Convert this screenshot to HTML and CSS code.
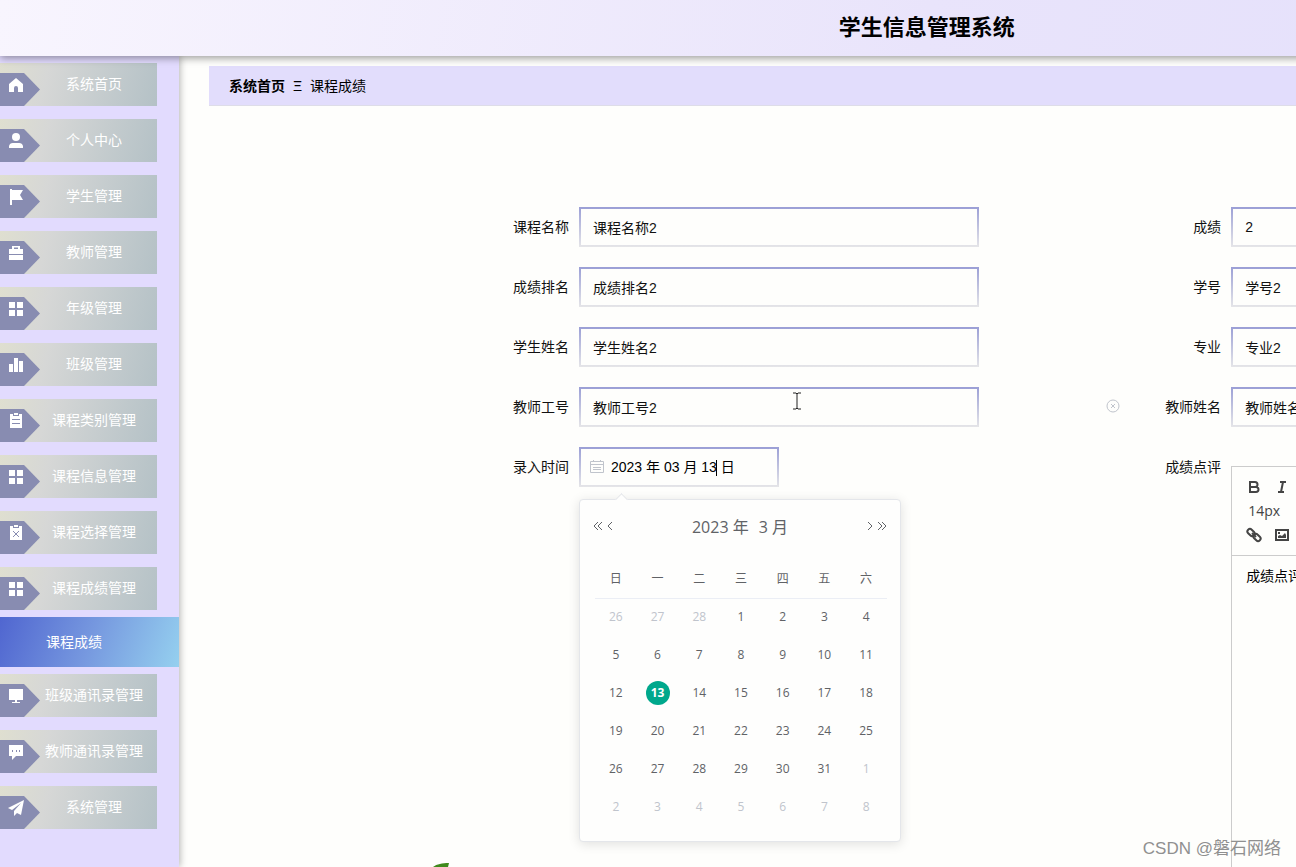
FILE: index.html
```html
<!DOCTYPE html>
<html lang="zh-CN">
<head>
    <meta charset="UTF-8">
    <meta name="viewport" content="width=device-width, initial-scale=1.0">
    <title>学生信息管理系统</title>
    <link rel="stylesheet" href="styles.css">
</head>
<body>

    <header class="header"><h1>学生信息管理系统</h1></header>

    <div class="layout">
        <!-- Side menu -->
        <nav class="sidebar">
            <a class="menu-item" href="#"><i class="arrow"></i><svg class="menu-icon" viewBox="0 0 16 16"><path d="M8 1 1 7v8h5v-4a2 2 0 0 1 4 0v4h5V7z"/></svg><span>系统首页</span></a>
            <a class="menu-item" href="#"><i class="arrow"></i><svg class="menu-icon" viewBox="0 0 16 16"><circle cx="8" cy="4" r="4"/><path d="M1 15v-2a4 4 0 0 1 4-3h6a4 4 0 0 1 4 3v2z"/></svg><span>个人中心</span></a>
            <a class="menu-item" href="#"><i class="arrow"></i><svg class="menu-icon" viewBox="0 0 16 16"><path d="M2 0h2v1h11l-3 5 3 5H4v5H2z"/></svg><span>学生管理</span></a>
            <a class="menu-item" href="#"><i class="arrow"></i><svg class="menu-icon" viewBox="0 0 16 16"><path d="M4 4V1h8v3h3v5H1V4zm2 0h4V2.500H6zM1 10h14v5H1z"/></svg><span>教师管理</span></a>
            <a class="menu-item" href="#"><i class="arrow"></i><svg class="menu-icon" viewBox="0 0 16 16"><path d="M1 1h6v6H1zM9 1h6v6H9zM1 9h6v6H1zM9 9h6v6H9z"/></svg><span>年级管理</span></a>
            <a class="menu-item" href="#"><i class="arrow"></i><svg class="menu-icon" viewBox="0 0 16 16"><path d="M1 7h4v8H1zM6 1h4v14H6zM11 4h4v11h-4z"/></svg><span>班级管理</span></a>
            <a class="menu-item" href="#"><i class="arrow"></i><svg class="menu-icon" viewBox="0 0 16 16"><path fill-rule="evenodd" d="M2 1h3v2h6V1h3v14H2zM4 6v1h8V6zm0 4v1h8v-1zM6 0h4v2H6z"/></svg><span>课程类别管理</span></a>
            <a class="menu-item" href="#"><i class="arrow"></i><svg class="menu-icon" viewBox="0 0 16 16"><path d="M1 1h6v6H1zM9 1h6v6H9zM1 9h6v6H1zM9 9h6v6H9z"/></svg><span>课程信息管理</span></a>
            <a class="menu-item" href="#"><i class="arrow"></i><svg class="menu-icon" viewBox="0 0 16 16"><path d="M2 1h3v2h6V1h3v14H2zM6 0h4v2H6z"/><path class="cut" d="m5 6 6 6M11 6l-6 6"/></svg><span>课程选择管理</span></a>
            <a class="menu-item" href="#"><i class="arrow"></i><svg class="menu-icon" viewBox="0 0 16 16"><path d="M1 1h6v6H1zM9 1h6v6H9zM1 9h6v6H1zM9 9h6v6H9z"/></svg><span>课程成绩管理</span></a>
            <a class="sub-item" href="#">课程成绩</a>
            <a class="menu-item" href="#"><i class="arrow"></i><svg class="menu-icon" viewBox="0 0 16 16"><path d="M1 1h14v11H1zM7 12h2v2h3v1H4v-1h3z"/></svg><span>班级通讯录管理</span></a>
            <a class="menu-item" href="#"><i class="arrow"></i><svg class="menu-icon" viewBox="0 0 16 16"><path fill-rule="evenodd" d="M1 1h14v11H8l-4 4v-4H1zM4 6v2h1V6zm4 0v2h1V6zm3 0v2h1V6z"/></svg><span>教师通讯录管理</span></a>
            <a class="menu-item" href="#"><i class="arrow"></i><svg class="menu-icon" viewBox="0 0 16 16"><path d="M16 0 0 8l4 2 9-7-7 8v5l3-3 4 2z"/></svg><span>系统管理</span></a>
        </nav>

        <main class="main">
            <div class="breadcrumb"><b>系统首页</b><span>Ξ</span><span>课程成绩</span></div>

            <form class="form">
                <div class="field"><label for="course">课程名称</label><input class="box" id="course" type="text" value="课程名称2"></div>
                <div class="field"><label for="score">成绩</label><input class="box" id="score" type="text" value="2"></div>

                <div class="field"><label for="rank">成绩排名</label><input class="box" id="rank" type="text" value="成绩排名2"></div>
                <div class="field"><label for="number">学号</label><input class="box" id="number" type="text" value="学号2"></div>

                <div class="field"><label for="student">学生姓名</label><input class="box" id="student" type="text" value="学生姓名2"></div>
                <div class="field"><label for="major">专业</label><input class="box" id="major" type="text" value="专业2"></div>

                <div class="field">
                    <label for="teacherNo">教师工号</label><input class="box" id="teacherNo" type="text" value="教师工号2">
                    <button class="clear" type="button" aria-label="清空"><svg viewBox="0 0 14 14"><circle cx="7" cy="7" r="6"/><path d="m5 5 4 4M9 5l-4 4"/></svg></button>
                </div>
                <div class="field"><label for="teacher">教师姓名</label><input class="box" id="teacher" type="text" value="教师姓名2"></div>

                <div class="field">
                    <label for="date">录入时间</label>
                    <div class="date">
                        <div class="box date-box">
                            <svg class="date-icon" viewBox="0 0 14 14"><path d="M.5 1.500h13v11H.5zM.5 4.500h13M3.500 0v2M10.500 0v2M3 7.500h8M3 9.500h8"/></svg>
                            <input id="date" type="text" value="2023 年 03 月 13 日">
                            <i class="caret"></i>
                        </div>

                        <!-- Date picker -->
                        <div class="picker">
                            <i class="picker-tip"></i>
                            <div class="picker-header">
                                <button type="button" aria-label="前一年"><svg viewBox="0 0 12 12"><path d="M6 1 2 5l4 4M10 1 6 5l4 4"/></svg></button>
                                <button type="button" aria-label="上个月"><svg viewBox="0 0 12 12"><path d="M8 1 4 5l4 4"/></svg></button>
                                <div class="picker-title"><span>2023 年</span><span>3 月</span></div>
                                <button type="button" aria-label="下个月"><svg viewBox="0 0 12 12"><path d="m4 1 4 4-4 4"/></svg></button>
                                <button type="button" aria-label="后一年"><svg viewBox="0 0 12 12"><path d="m2 1 4 4-4 4M6 1l4 4-4 4"/></svg></button>
                            </div>
                            <table class="days">
                                <thead>
                                    <tr><th>日</th><th>一</th><th>二</th><th>三</th><th>四</th><th>五</th><th>六</th></tr>
                                </thead>
                                <tbody>
                                    <tr><td class="other"><button type="button">26</button></td><td class="other"><button type="button">27</button></td><td class="other"><button type="button">28</button></td><td><button type="button">1</button></td><td><button type="button">2</button></td><td><button type="button">3</button></td><td><button type="button">4</button></td></tr>
                                    <tr><td><button type="button">5</button></td><td><button type="button">6</button></td><td><button type="button">7</button></td><td><button type="button">8</button></td><td><button type="button">9</button></td><td><button type="button">10</button></td><td><button type="button">11</button></td></tr>
                                    <tr><td><button type="button">12</button></td><td class="current"><button type="button">13</button></td><td><button type="button">14</button></td><td><button type="button">15</button></td><td><button type="button">16</button></td><td><button type="button">17</button></td><td><button type="button">18</button></td></tr>
                                    <tr><td><button type="button">19</button></td><td><button type="button">20</button></td><td><button type="button">21</button></td><td><button type="button">22</button></td><td><button type="button">23</button></td><td><button type="button">24</button></td><td><button type="button">25</button></td></tr>
                                    <tr><td><button type="button">26</button></td><td><button type="button">27</button></td><td><button type="button">28</button></td><td><button type="button">29</button></td><td><button type="button">30</button></td><td><button type="button">31</button></td><td class="other"><button type="button">1</button></td></tr>
                                    <tr><td class="other"><button type="button">2</button></td><td class="other"><button type="button">3</button></td><td class="other"><button type="button">4</button></td><td class="other"><button type="button">5</button></td><td class="other"><button type="button">6</button></td><td class="other"><button type="button">7</button></td><td class="other"><button type="button">8</button></td></tr>
                                </tbody>
                            </table>
                        </div>
                    </div>
                </div>

                <div class="field">
                    <label for="comment">成绩点评</label>
                    <div class="editor">
                        <div class="toolbar">
                            <div class="tools">
                                <button type="button" aria-label="加粗"><svg viewBox="0 0 18 18"><path d="M5 4h5a2.500 2.500 0 0 1 0 5H5zM5 9h6a2.500 2.500 0 0 1 0 5H5z"/></svg></button>
                                <button type="button" aria-label="斜体"><svg viewBox="0 0 18 18"><path d="M7 4h6M5 14h6M10 4 8 14"/></svg></button>
                            </div>
                            <div class="tools"><button class="size" type="button">14px</button></div>
                            <div class="tools">
                                <button type="button" aria-label="链接"><svg viewBox="0 0 18 18"><rect x="2" y="4" width="8" height="5" rx="2.500" transform="rotate(45 6 6.500)"/><rect x="8" y="9" width="8" height="5" rx="2.500" transform="rotate(45 12 11.500)"/><path d="m7 7 4 4"/></svg></button>
                                <button type="button" aria-label="图片"><svg viewBox="0 0 18 18"><path d="M3 4h12v10H3z"/><path class="solid" d="m5 12 0-2 2-1 2 1 3-3 1 2v3zM5 6h2v2H5z"/></svg></button>
                            </div>
                        </div>
                        <textarea id="comment">成绩点评2</textarea>
                    </div>
                </div>
            </form>
        </main>
    </div>

    <svg class="leaf" viewBox="0 0 16 4"><path d="M0 4C4 1 9 0 16 0l-1 4z"/></svg>
    <svg class="pointer" viewBox="0 0 10 18"><path d="M1 1h3l1 1 1-1h3M5 2v14M1 17h3l1-1 1 1h3"/></svg>
    <div class="watermark">CSDN @磐石网络</div>

</body>
</html>
```
FILE: styles.css
```css
* {
    box-sizing: border-box;
}

body {
    margin: 0;
    height: 100vh;
    overflow: hidden;
    position: relative;
    display: flex;
    flex-direction: column;
    background: #fefefc;
    color: #111;
    font: 14px/20px "Liberation Sans", "Noto Sans CJK SC", sans-serif;
}

button {
    padding: 0;
    border: 0;
    background: none;
    color: inherit;
    font: inherit;
}

svg {
    display: block;
}

/* The page is wider than the window and runs off its right edge */
.header,
.layout {
    width: 143vw;
}

.header {
    flex: none;
    z-index: 2;
    height: 56px;
    display: flex;
    align-items: center;
    justify-content: center;
    background: linear-gradient(100deg, #f8f5fe, #e9e4fb 50%, #e2defb);
    box-shadow: 0 2px 8px rgba(0, 0, 0, 0.4);
}

.header h1 {
    margin: 0;
    font-size: 22px;
    line-height: 54px;
    color: #000;
}

.layout {
    flex: 1;
    min-height: 0;
    display: flex;
}

/* Side menu */
.sidebar {
    flex: none;
    width: 179px;
    display: flex;
    flex-direction: column;
    background: #e2dbfe;
    box-shadow: 1px 0 7px rgba(0, 0, 0, 0.3);
}

.menu-item {
    position: relative;
    flex: none;
    width: 157px;
    height: 43px;
    margin: 7px 0 6px;
    padding: 0 0 2px 31px;
    display: flex;
    align-items: center;
    justify-content: center;
    color: #fff;
    text-decoration: none;
    background: linear-gradient(105deg, #dfdfd0, #d6d7d6 30%, #b4c1c6);
}

.arrow {
    position: absolute;
    left: 0;
    bottom: 0;
    width: 40px;
    height: 33px;
    background: #888cb1;
    clip-path: polygon(0 0, 24px 0, 100% 50%, 24px 100%, 0 100%);
}

.menu-icon {
    position: absolute;
    left: 8px;
    top: 14px;
    width: 16px;
    height: 16px;
    fill: #fff;
}

.menu-icon .cut {
    stroke: #888cb1;
    stroke-width: 1;
}

.sub-item {
    flex: none;
    margin-top: 1px;
    padding-left: 46px;
    line-height: 50px;
    color: #fff;
    text-decoration: none;
    background: linear-gradient(110deg, #5066d0, #7698df 50%, #95d0ef);
}

/* Content */
.main {
    flex: 1;
    min-width: 0;
    padding: 10px 30px 0;
}

.breadcrumb {
    height: 40px;
    padding: 0 20px;
    display: flex;
    align-items: center;
    gap: 8px;
    background: #e2ddfc;
    border-bottom: 1px solid #dedde8;
    color: #000;
}

.form {
    padding: 101px 30px 0 280px;
    display: grid;
    grid-template-columns: 1fr 1fr;
    row-gap: 20px;
}

.field {
    display: flex;
    align-items: flex-start;
    min-width: 0;
}

.field label {
    flex: none;
    width: 80px;
    margin-right: 10px;
    line-height: 40px;
    text-align: right;
}

.box {
    width: 400px;
    height: 40px;
    padding: 0 12px;
    border: 2px solid;
    border-image: linear-gradient(#9b9fd6, #e5e5e8) 2;
    background: transparent;
    color: #111;
    font: inherit;
}

.clear {
    margin: 12px 21px 0 auto;
}

.clear svg {
    width: 14px;
    height: 14px;
    fill: none;
    stroke: #c0c4cc;
}

.date {
    position: relative;
}

.date-box {
    position: relative;
    width: 200px;
    padding: 0 9px;
    display: flex;
    align-items: center;
    gap: 7px;
}

.date-box input {
    flex: 1;
    min-width: 0;
    padding: 0;
    border: 0;
    background: none;
    color: #000;
    font: inherit;
}

.date-icon {
    width: 14px;
    height: 14px;
    fill: none;
    stroke: #c0c4cc;
}

.caret {
    position: absolute;
    left: 135px;
    top: 11px;
    width: 1px;
    height: 16px;
    background: #000;
}

/* Date picker */
.picker {
    position: absolute;
    z-index: 1;
    left: 0;
    top: 52px;
    width: 322px;
    border: 1px solid #e4e6ea;
    border-radius: 4px;
    background: #fefefd;
    box-shadow: 0 2px 12px rgba(0, 0, 0, 0.12);
    color: #606266;
    font-family: "Open Sans", "Noto Sans CJK SC", sans-serif;
}

.picker-tip {
    position: absolute;
    left: 37px;
    top: -5px;
    width: 9px;
    height: 9px;
    background: #fefefd;
    border: 1px solid #e4e6ea;
    border-width: 1px 0 0 1px;
    transform: rotate(45deg);
}

.picker-header {
    margin: 12px 12px 16px;
    height: 30px;
    display: flex;
    align-items: center;
}

.picker-header svg {
    width: 12px;
    height: 12px;
    fill: none;
    stroke: #606266;
}

.picker-title {
    flex: 1;
    display: flex;
    justify-content: center;
    gap: 10px;
    font-size: 16px;
    line-height: 30px;
}

.days {
    width: 292px;
    margin: 0 13px 15px 15px;
    table-layout: fixed;
    border-collapse: collapse;
    font-size: 12px;
    text-align: center;
}

.days th {
    height: 40px;
    padding: 2px 0 0;
    border-bottom: 1px solid #ebeef5;
    font-weight: 400;
}

.days td {
    height: 38px;
    padding: 0;
}

.days button {
    width: 24px;
    height: 24px;
    line-height: 24px;
    border-radius: 50%;
}

.days .other {
    color: #c0c4cc;
}

.days .current button {
    background: #00a88c;
    color: #fff;
    font-weight: 700;
}

/* Rich text editor */
.editor {
    flex: 1;
    height: 500px;
    margin-top: 19px;
    display: flex;
    flex-direction: column;
    border: 1px solid #ccc;
}

.toolbar {
    padding: 8px;
    border-bottom: 1px solid #ccc;
    color: #444;
}

.tools {
    height: 24px;
    display: flex;
    align-items: center;
}

.tools button {
    width: 28px;
    padding: 0 5px;
}

.tools svg {
    width: 18px;
    height: 18px;
    fill: none;
    stroke: #444;
    stroke-width: 2;
}

.tools .solid {
    fill: #444;
    stroke: none;
}

.tools .size {
    width: auto;
    padding: 0 8px;
    font-family: "Open Sans", sans-serif;
}

.editor textarea {
    flex: 1;
    padding: 10px 14px;
    border: 0;
    resize: none;
    background: none;
    color: #000;
    font: inherit;
}

/* Things lying over the page */
.leaf {
    position: absolute;
    left: 433px;
    bottom: 0;
    width: 16px;
    height: 4px;
    fill: #3f8a1c;
}

.pointer {
    position: absolute;
    left: 792px;
    top: 392px;
    width: 10px;
    height: 18px;
    fill: none;
    stroke: #222;
}

.watermark {
    position: absolute;
    right: 15px;
    bottom: 6px;
    z-index: 3;
    color: #909090;
    font-size: 17px;
    line-height: 24px;
}
```
